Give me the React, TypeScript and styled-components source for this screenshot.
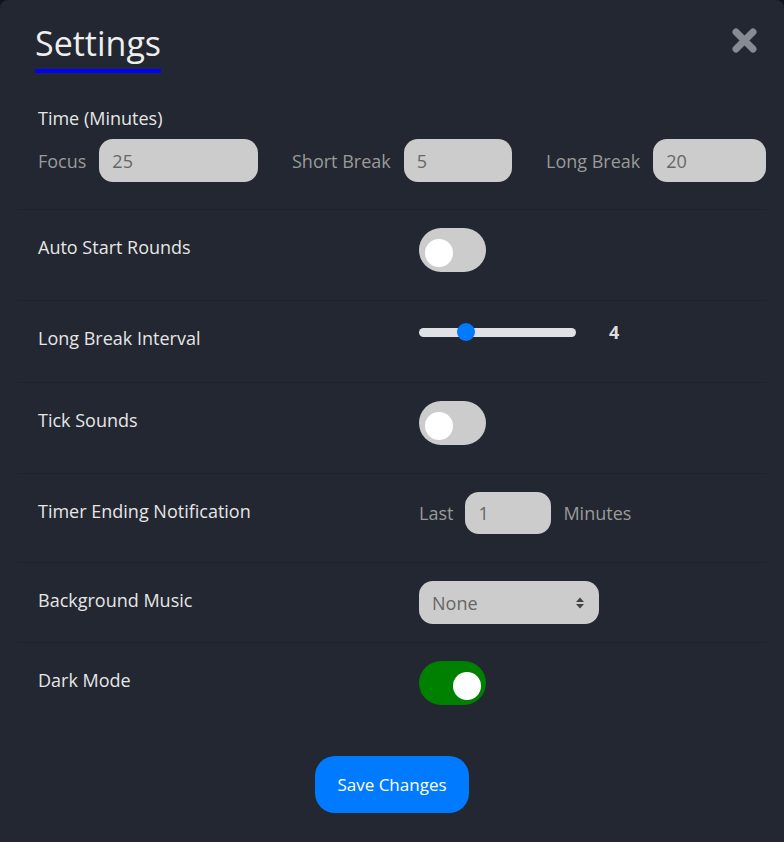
import { useState } from "react";
import styled, { createGlobalStyle } from "styled-components";

const GlobalStyle = createGlobalStyle`
  body {
    margin: 0;
    background: #111317;
    font-family: "Open Sans", "Noto Sans", sans-serif;
    overflow: hidden;
  }
`;

const CloseIcon = () => (
  <svg width="25" height="25" viewBox="0 0 25 25">
    <path
      d="M4 4 L21 21 M21 4 L4 21"
      stroke="#868b94"
      strokeWidth="7"
      strokeLinecap="round"
    />
  </svg>
);

const SortIcon = () => (
  <svg width="10" height="12" viewBox="0 0 10 12">
    <path d="M5 0.5 L9 5 H1 Z M5 11.5 L9 7 H1 Z" fill="#444" />
  </svg>
);

const Toggle = ({ on }: { on: boolean }) => {
  const [value, setValue] = useState(on);
  return (
    <Switch type="button" $on={value} onClick={() => setValue(!value)}>
      <Knob />
    </Switch>
  );
};

export default function App() {
  const [interval, setInterval] = useState(4);
  return (
    <>
      <GlobalStyle />
      <Modal>
        <Header>
          <Title>Settings</Title>
          <CloseButton type="button" aria-label="close">
            <CloseIcon />
          </CloseButton>
        </Header>
        <Body>
          <TimeSection>
            <RowLabel>Time (Minutes)</RowLabel>
            <TimeInputs>
              <TimeGroup>
                <MutedText>Focus</MutedText>
                <NumberInput defaultValue="25" />
              </TimeGroup>
              <TimeGroup>
                <MutedText>Short Break</MutedText>
                <NumberInput defaultValue="5" />
              </TimeGroup>
              <TimeGroup>
                <MutedText>Long Break</MutedText>
                <NumberInput defaultValue="20" />
              </TimeGroup>
            </TimeInputs>
          </TimeSection>

          <Row $height={91}>
            <Label>Auto Start Rounds</Label>
            <Control>
              <Toggle on={false} />
            </Control>
          </Row>

          <Row $height={82}>
            <Label>Long Break Interval</Label>
            <Control>
              <Range
                type="range"
                min={1}
                max={12}
                value={interval}
                onChange={(e) => setInterval(Number(e.target.value))}
              />
              <RangeValue>{interval}</RangeValue>
            </Control>
          </Row>

          <Row $height={91}>
            <Label>Tick Sounds</Label>
            <Control>
              <Toggle on={false} />
            </Control>
          </Row>

          <Row $height={89}>
            <Label>Timer Ending Notification</Label>
            <Control>
              <MutedText>Last</MutedText>
              <SmallInput defaultValue="1" />
              <MutedText>Minutes</MutedText>
            </Control>
          </Row>

          <Row $height={80}>
            <Label>Background Music</Label>
            <Control>
              <SelectWrap>
                <Select defaultValue="none">
                  <option value="none">None</option>
                  <option value="rain">Rain</option>
                  <option value="cafe">Cafe</option>
                </Select>
                <SelectArrow>
                  <SortIcon />
                </SelectArrow>
              </SelectWrap>
            </Control>
          </Row>

          <Row $height={77} $last>
            <Label>Dark Mode</Label>
            <Control>
              <Toggle on={true} />
            </Control>
          </Row>
        </Body>
        <Footer>
          <SaveButton type="button">Save Changes</SaveButton>
        </Footer>
      </Modal>
    </>
  );
}

const Modal = styled.div`
  box-sizing: border-box;
  width: 784px;
  height: 842px;
  background: #222731;
  border-radius: 8px 8px 0 0;
  color: #e6e6e6;
`;

const Header = styled.div`
  display: flex;
  justify-content: space-between;
  align-items: flex-start;
  padding: 20px 27px 0 35px;
`;

const Title = styled.h1`
  margin: 0;
  font-size: 34px;
  line-height: 46px;
  font-weight: 400;
  color: #eeeeee;
  padding: 0 0 3px 0;
  border-bottom: 4px solid #0000ff;
`;

const CloseButton = styled.button`
  display: flex;
  padding: 0;
  margin-top: 8px;
  border: none;
  background: none;
  cursor: pointer;
`;

const Body = styled.div`
  margin: 33px 18px 0 18px;
`;

const TimeSection = styled.div`
  box-sizing: border-box;
  height: 104px;
  padding-left: 20px;
  border-bottom: 1px solid #1e222b;
`;

const TimeInputs = styled.div`
  display: flex;
  justify-content: space-between;
  margin-top: 8px;
`;

const TimeGroup = styled.div`
  display: flex;
  align-items: center;
  gap: 13px;
  width: 220px;
`;

const RowLabel = styled.div`
  font-size: 18px;
  line-height: 25px;
  font-weight: 500;
  color: #e6e6e6;
`;

const Label = styled(RowLabel)`
  margin-top: 7px;
`;

const Row = styled.div<{ $height: number; $last?: boolean }>`
  box-sizing: border-box;
  display: grid;
  grid-template-columns: 381px 1fr;
  align-items: start;
  height: ${(p) => p.$height}px;
  padding: 18px 0 0 20px;
  border-bottom: ${(p) => (p.$last ? "none" : "1px solid #1e222b")};
`;

const Control = styled.div`
  display: flex;
  align-items: center;
  gap: 12px;
`;

const MutedText = styled.span`
  font-size: 18px;
  color: #9a9a9a;
  white-space: nowrap;
`;

const NumberInput = styled.input`
  box-sizing: border-box;
  flex: 1;
  min-width: 0;
  height: 43px;
  padding: 0 13px;
  border: none;
  border-radius: 14px;
  background: #cccccc;
  color: #666666;
  font-family: inherit;
  font-size: 18px;
  outline: none;
`;

const SmallInput = styled(NumberInput)`
  flex: none;
  width: 86px;
  height: 42px;
`;

const Switch = styled.button<{ $on: boolean }>`
  box-sizing: border-box;
  display: flex;
  align-items: center;
  justify-content: ${(p) => (p.$on ? "flex-end" : "flex-start")};
  width: 67px;
  height: 44px;
  padding: 0 5px 0 6px;
  border: none;
  border-radius: 22px;
  background: ${(p) => (p.$on ? "#008000" : "#cccccc")};
  cursor: pointer;
`;

const Knob = styled.span`
  width: 28px;
  height: 28px;
  margin-top: 6px;
  border-radius: 50%;
  background: #ffffff;
`;

const Range = styled.input`
  -webkit-appearance: none;
  appearance: none;
  width: 157px;
  height: 26px;
  margin: 0;
  background: transparent;
  &::-webkit-slider-runnable-track {
    height: 9px;
    border-radius: 5px;
    background: #dee2e6;
  }
  &::-webkit-slider-thumb {
    -webkit-appearance: none;
    width: 18px;
    height: 18px;
    margin-top: -4.5px;
    border: none;
    border-radius: 50%;
    background: #007bff;
  }
`;

const RangeValue = styled.span`
  margin-left: 21px;
  font-size: 18px;
  font-weight: 700;
  color: #dddddd;
`;

const SelectWrap = styled.div`
  position: relative;
  width: 180px;
`;

const Select = styled.select`
  box-sizing: border-box;
  width: 100%;
  height: 43px;
  padding: 0 13px;
  -webkit-appearance: none;
  appearance: none;
  border: none;
  border-radius: 14px;
  background: #cccccc;
  color: #666666;
  font-family: inherit;
  font-size: 18px;
  outline: none;
`;

const SelectArrow = styled.span`
  position: absolute;
  right: 14px;
  top: 50%;
  transform: translateY(-50%);
  display: flex;
  pointer-events: none;
`;

const Footer = styled.div`
  display: flex;
  justify-content: center;
  padding-top: 36px;
`;

const SaveButton = styled.button`
  width: 154px;
  height: 57px;
  border: none;
  border-radius: 20px;
  background: #007bff;
  color: #ffffff;
  font-family: inherit;
  font-size: 17px;
  cursor: pointer;
`;
